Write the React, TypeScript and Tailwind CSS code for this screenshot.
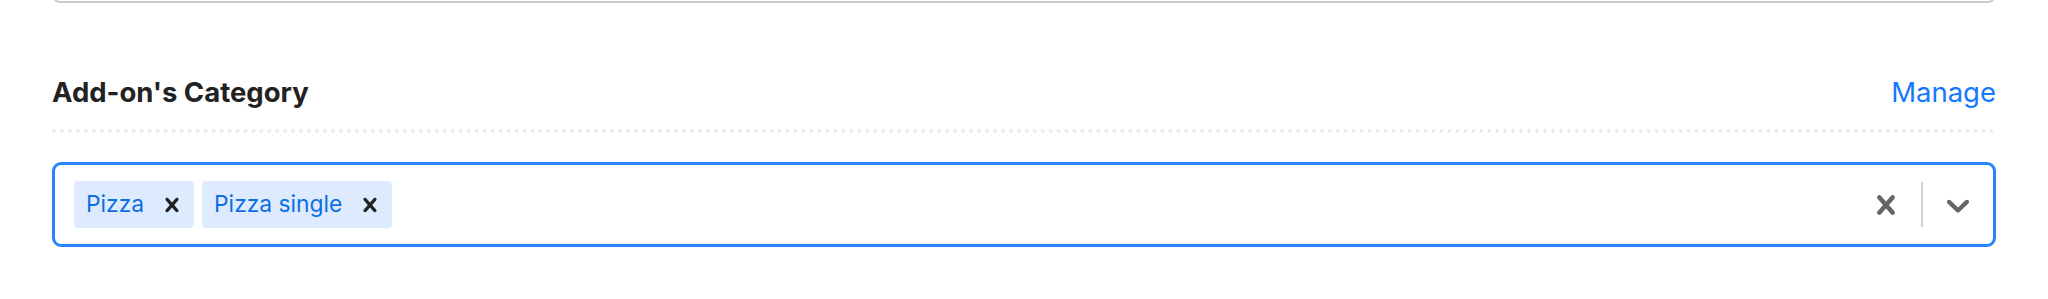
import type { ReactNode } from "react";

type IconProps = { size: number; className?: string };

function CrossIcon({ size, className }: IconProps) {
  return (
    <svg
      viewBox="0 0 20 20"
      width={size}
      height={size}
      fill="currentColor"
      aria-hidden="true"
      className={className}
    >
      <path d="M14.348 14.849c-0.469 0.469-1.229 0.469-1.697 0l-2.651-3.030-2.651 3.029c-0.469 0.469-1.229 0.469-1.697 0-0.469-0.469-0.469-1.229 0-1.697l2.758-3.15-2.759-3.152c-0.469-0.469-0.469-1.228 0-1.697s1.228-0.469 1.697 0l2.652 3.031 2.651-3.031c0.469-0.469 1.228-0.469 1.697 0s0.469 1.229 0 1.697l-2.758 3.152 2.758 3.15c0.469 0.469 0.469 1.229 0 1.698z" />
    </svg>
  );
}

function ChevronIcon({ size, className }: IconProps) {
  return (
    <svg
      viewBox="0 0 20 20"
      width={size}
      height={size}
      fill="currentColor"
      aria-hidden="true"
      className={className}
    >
      <path d="M4.516 7.548c0.436-0.446 1.043-0.481 1.576 0l3.908 3.747 3.908-3.747c0.533-0.481 1.141-0.446 1.574 0 0.436 0.445 0.408 1.197 0 1.615-0.406 0.418-4.695 4.502-4.695 4.502-0.217 0.223-0.502 0.335-0.787 0.335s-0.57-0.112-0.789-0.335c0 0-4.287-4.084-4.695-4.502s-0.436-1.17 0-1.615z" />
    </svg>
  );
}

function Chip({ children }: { children: ReactNode }) {
  return (
    <div className="flex h-[47px] items-center rounded-[4px] bg-[#deebff]">
      <span className="pl-3 pr-[6px] text-[22.8px] leading-none text-[#0b6fe3]">
        {children}
      </span>
      <span className="flex items-center px-2 text-[#222222]">
        <CrossIcon size={28} />
      </span>
    </div>
  );
}

export default function App() {
  const selected = ["Pizza", "Pizza single"];

  return (
    <div className="min-h-screen bg-white px-[52px] font-['Inter','Liberation_Sans',sans-serif]">
      {/* bottom edge of the previous field, scrolled mostly out of view */}
      <div className="flex h-[3px] flex-col justify-end overflow-hidden">
        <div className="h-[40px] shrink-0 rounded-[8px] border-2 border-[#cccccc]" />
      </div>

      <div className="mt-[68px] flex items-center justify-between leading-[42px]">
        <h2 className="text-[27.5px] font-bold text-[#222222]">Add-on's Category</h2>
        <a href="#" className="text-[27.5px] text-[#1677ff]">
          Manage
        </a>
      </div>
      <div className="mt-4 border-b-4 border-dotted border-[#ebebeb]" />

      <div className="mt-[29px] flex h-[85px] items-center rounded-[9px] border-[3px] border-[#2684ff] bg-white">
        <div className="flex flex-1 items-center gap-2 pl-[19px]">
          {selected.map((item) => (
            <Chip key={item}>{item}</Chip>
          ))}
        </div>
        <div className="flex self-stretch">
          <div className="flex items-center px-4 text-[#666666]">
            <CrossIcon size={38} />
          </div>
          <span className="my-[17px] w-[2px] bg-[#d0d0d0]" />
          <div className="flex items-center px-4 text-[#666666]">
            <ChevronIcon size={38} />
          </div>
        </div>
      </div>
    </div>
  );
}
